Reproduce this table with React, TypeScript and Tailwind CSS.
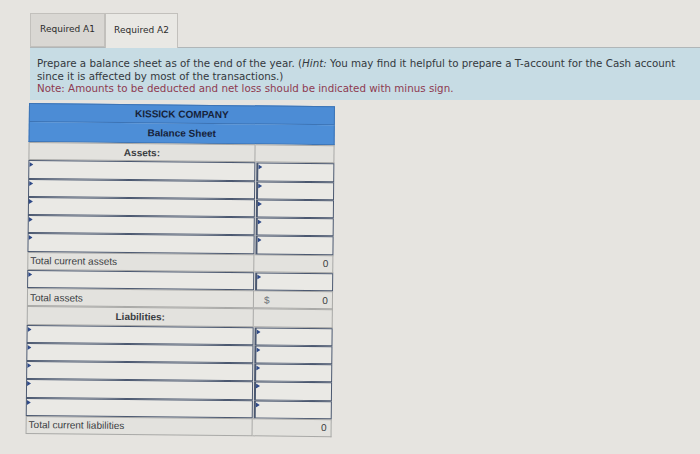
import React from "react";

type Row =
  | { kind: "label"; text: string }
  | { kind: "input" }
  | { kind: "total"; text: string; value: string; dollar?: boolean };

const rows: Row[] = [
  { kind: "label", text: "Assets:" },
  { kind: "input" },
  { kind: "input" },
  { kind: "input" },
  { kind: "input" },
  { kind: "input" },
  { kind: "total", text: "Total current assets", value: "0" },
  { kind: "input" },
  { kind: "total", text: "Total assets", value: "0", dollar: true },
  { kind: "label", text: "Liabilities:" },
  { kind: "input" },
  { kind: "input" },
  { kind: "input" },
  { kind: "input" },
  { kind: "input" },
  { kind: "total", text: "Total current liabilities", value: "0" },
];

function Marker() {
  return (
    <svg className="absolute left-[0px] top-[1px]" width="4" height="5" viewBox="0 0 4 5">
      <path d="M0 0 L4 2.5 L0 5 Z" fill="#2f4a88" />
    </svg>
  );
}

function InputCell({ className }: { className: string }) {
  return (
    <div className={"relative bg-[#eae9e5] border border-[#4b5870] " + className}>
      <Marker />
    </div>
  );
}

export default function App() {
  return (
    <div className="relative w-[700px] h-[454px] overflow-hidden bg-[#e6e4e0] font-['DejaVu_Sans',sans-serif]">
      {/* Tabs */}
      <div className="flex pl-[30px] pt-[13px] h-[47px]">
        <div className="w-[75px] h-[34px] flex items-center justify-center bg-[#d9d7d3] border border-[#c2c0bc] text-[9px] text-[#2b2b2b]">
          Required A1
        </div>
        <div className="w-[73px] h-[35px] flex items-center justify-center bg-[#e9e8e4] border border-b-0 border-[#c2c0bc] text-[9px] text-[#2b2b2b]">
          Required A2
        </div>
      </div>

      {/* Instructions */}
      <div className="ml-[30px] h-[53px] bg-[#c7dce4] border-t border-[#b0b6b8] pl-[7px] pt-[9px] text-[10.3px] leading-[12.5px] text-[#33383d]">
        <div className="whitespace-nowrap">
          Prepare a balance sheet as of the end of the year. (<i>Hint:</i> You may find it helpful to prepare a T-account for the Cash account
        </div>
        <div>since it is affected by most of the transactions.)</div>
        <div className="text-[#8e3a50]">Note: Amounts to be deducted and net loss should be indicated with minus sign.</div>
      </div>

      {/* Table */}
      <div className="ml-[29px] mt-[3px] w-[306px] rotate-[0.6deg] origin-top-left font-['Liberation_Sans',sans-serif]">
        <div className="h-[19px] bg-[#4c8cd5] border border-[#3d74b5] flex items-center justify-center text-[10px] font-bold text-[#16223a]">
          KISSICK COMPANY
        </div>
        <div className="h-[20px] bg-[#4d8ed7] border border-t-0 border-[#3d74b5] flex items-center justify-center text-[10px] font-bold text-[#16223a]">
          Balance Sheet
        </div>
        {rows.map((r, i) => {
          if (r.kind === "input") {
            return (
              <div key={i} className="grid grid-cols-[227px_79px] h-[18.25px]">
                <InputCell className="" />
                <InputCell className="border-l-2 ml-[1px]" />
              </div>
            );
          }
          if (r.kind === "label") {
            return (
              <div key={i} className="grid grid-cols-[227px_79px] h-[18.25px] bg-[#e3e2de]">
                <div className="border border-[#a9a9a7] flex items-center justify-center text-[10px] font-bold text-[#3a3d42]">
                  {r.text}
                </div>
                <div className="border border-l-0 border-[#a9a9a7]" />
              </div>
            );
          }
          return (
            <div key={i} className="grid grid-cols-[227px_79px] h-[18.25px] bg-[#e3e2de]">
              <div className="border border-[#a9a9a7] flex items-center pl-[2px] text-[10px] text-[#3a3d42]">
                {r.text}
              </div>
              <div className="border border-l-0 border-[#a9a9a7] flex items-center justify-between pl-[10px] pr-[4px] text-[10px] text-[#3a3d42]">
                <span className="text-[#6b7078]">{r.dollar ? "$" : ""}</span>
                <span>{r.value}</span>
              </div>
            </div>
          );
        })}
      </div>
    </div>
  );
}
